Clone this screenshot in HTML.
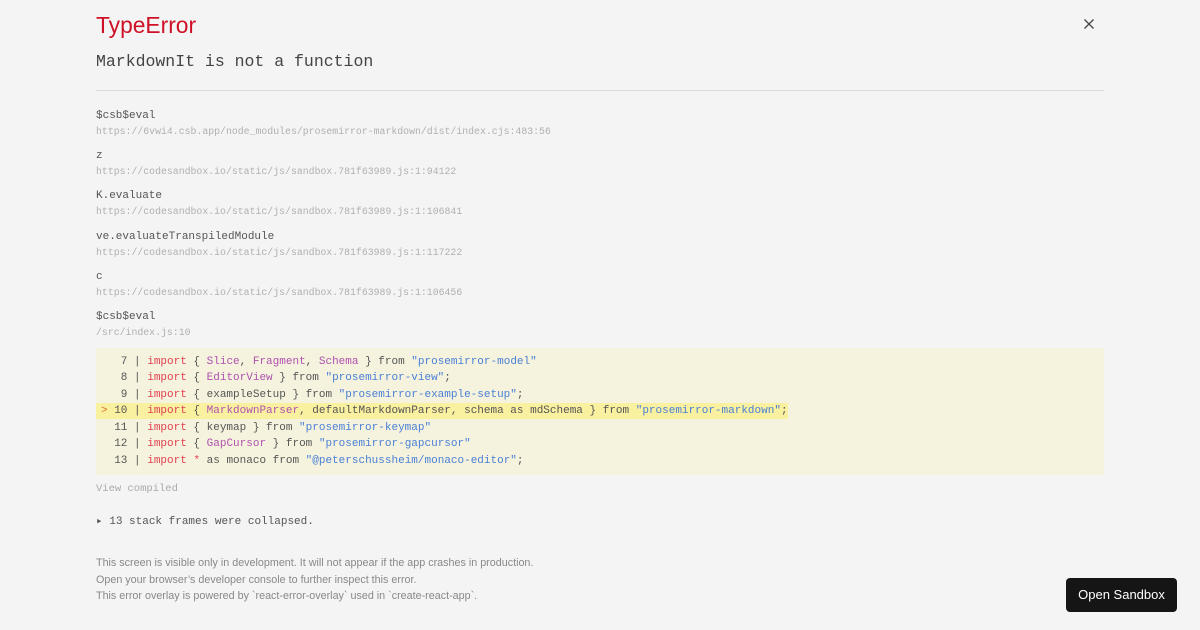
<!DOCTYPE html>
<html><head><meta charset="utf-8"><style>
body{margin:0;width:1200px;height:630px;background:#f4f4f4;position:relative;overflow:hidden;font-family:"Liberation Sans",sans-serif}
.a{position:absolute;white-space:pre}
.m{font-family:"Liberation Mono",monospace}
.n{font-size:11px;color:#555;line-height:14px}
.u{font-size:9.85px;color:#b0b0b0;line-height:14px}
.code{position:absolute;left:96px;top:348px;width:1008px;height:127px;background:#f5f3de;}
.l{position:absolute;left:0;height:16px;font-size:11px;line-height:16px;color:#555;font-family:"Liberation Mono",monospace;white-space:pre;padding-left:5px;box-sizing:border-box}
.k{color:#e04050}.p{color:#b050b0}.s{color:#4a7fd6}
.f{font-size:10.75px;color:#888;line-height:16.5px}
</style></head><body>
<div class="a" style="left:96px;top:11px;font-size:22.8px;color:#ce1126;line-height:28px">TypeError</div>
<div class="a m" style="left:96px;top:52px;font-size:16.5px;color:#444;line-height:20px">MarkdownIt is not a function</div>
<svg class="a" style="left:1083px;top:18px" width="12" height="12" viewBox="0 0 12 12"><path d="M1.5 1.5L10.5 10.5M10.5 1.5L1.5 10.5" stroke="#444" stroke-width="1.3"/></svg>
<div class="a" style="left:96px;top:90px;width:1008px;height:1px;background:#ddd"></div>

<div class="a m n" style="left:96px;top:109px">$csb$eval</div>
<div class="a m u" style="left:96px;top:125px">https://6vwi4.csb.app/node_modules/prosemirror-markdown/dist/index.cjs:483:56</div>
<div class="a m n" style="left:96px;top:149px">z</div>
<div class="a m u" style="left:96px;top:165px">https://codesandbox.io/static/js/sandbox.781f63989.js:1:94122</div>
<div class="a m n" style="left:96px;top:189px">K.evaluate</div>
<div class="a m u" style="left:96px;top:205px">https://codesandbox.io/static/js/sandbox.781f63989.js:1:106841</div>
<div class="a m n" style="left:96px;top:230px">ve.evaluateTranspiledModule</div>
<div class="a m u" style="left:96px;top:246px">https://codesandbox.io/static/js/sandbox.781f63989.js:1:117222</div>
<div class="a m n" style="left:96px;top:270px">c</div>
<div class="a m u" style="left:96px;top:286px">https://codesandbox.io/static/js/sandbox.781f63989.js:1:106456</div>
<div class="a m n" style="left:96px;top:310px">$csb$eval</div>
<div class="a m u" style="left:96px;top:326px">/src/index.js:10</div>

<div class="code">
<div class="l" style="top:5.5px">   7 | <span class="k">import</span> { <span class="p">Slice</span>, <span class="p">Fragment</span>, <span class="p">Schema</span> } from <span class="s">"prosemirror-model"</span></div>
<div class="l" style="top:22px">   8 | <span class="k">import</span> { <span class="p">EditorView</span> } from <span class="s">"prosemirror-view"</span>;</div>
<div class="l" style="top:38.5px">   9 | <span class="k">import</span> { exampleSetup } from <span class="s">"prosemirror-example-setup"</span>;</div>
<div class="l" style="top:55px;background:#f9f0a0"><span style="color:#e07030">&gt;</span> 10 | <span class="k">import</span> { <span class="p">MarkdownParser</span>, defaultMarkdownParser, schema as mdSchema } from <span class="s">"prosemirror-markdown"</span>;</div>
<div class="l" style="top:71.5px">  11 | <span class="k">import</span> { keymap } from <span class="s">"prosemirror-keymap"</span></div>
<div class="l" style="top:88px">  12 | <span class="k">import</span> { <span class="p">GapCursor</span> } from <span class="s">"prosemirror-gapcursor"</span></div>
<div class="l" style="top:104.5px">  13 | <span class="k">import</span> <span class="k">*</span> as monaco from <span class="s">"@peterschussheim/monaco-editor"</span>;</div>
</div>

<div class="a m" style="left:96px;top:482px;font-size:10.5px;color:#aaa;line-height:14px">View compiled</div>
<div class="a m" style="left:96px;top:515px;font-size:11px;color:#555;line-height:14px">▸ 13 stack frames were collapsed.</div>

<div class="a f" style="left:96px;top:555px">This screen is visible only in development. It will not appear if the app crashes in production.
Open your browser’s developer console to further inspect this error.
This error overlay is powered by `react-error-overlay` used in `create-react-app`.</div>

<div class="a" style="left:1066px;top:578px;width:111px;height:34px;background:#151515;border-radius:4px;color:#fff;font-size:13px;line-height:34px;text-align:center">Open Sandbox</div>
</body></html>
